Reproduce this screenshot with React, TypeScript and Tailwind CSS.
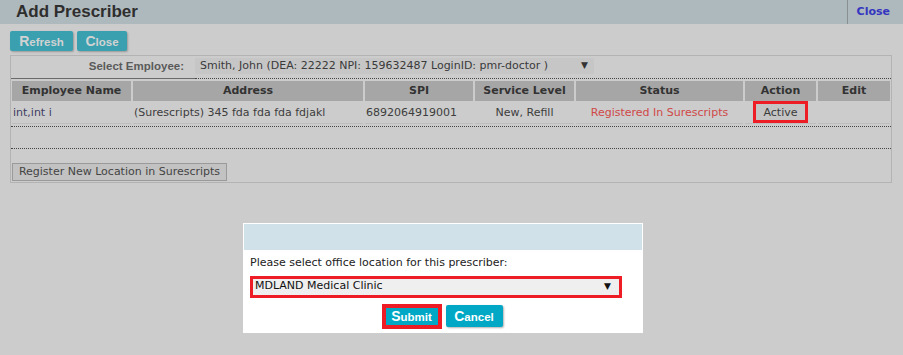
const cols = 'grid grid-cols-[119px_230px_108px_99px_167px_71px_72px] gap-x-[2px]'

const FirstBig = ({ text }: { text: string }) => (
  <span className="font-['Liberation_Sans',Arial,sans-serif] font-bold leading-none">
    <span className="text-[14px]">{text[0]}</span>
    <span className="text-[11.5px]">{text.slice(1)}</span>
  </span>
)

const App = () => {
  return (
    <div className="relative w-[903px] h-[355px] bg-[#cccccc] overflow-hidden font-['DejaVu_Sans',Verdana,sans-serif] text-[11px] text-[#3d3d3d]">
      {/* title bar */}
      <div className="flex items-center justify-between h-[24px] bg-[#aeb9be]">
        <div className="pl-[16px] font-['Liberation_Sans',Arial,sans-serif] font-bold text-[17px] text-[#2e2e2e]">
          Add Prescriber
        </div>
        <div className="flex items-center h-full border-l border-[#8a8f92] pl-[9px] pr-[13px] font-bold text-[11px] text-[#3535c0]">
          Close
        </div>
      </div>

      {/* toolbar */}
      <div className="flex gap-[4px] ml-[10px] mt-[7px]">
        <button className="flex items-center justify-center w-[63px] h-[20px] rounded-[2px] bg-[#3aa0b0] text-[#d2d2d2] shadow-[1px_1px_2px_rgba(0,0,0,0.25)]">
          <FirstBig text="Refresh" />
        </button>
        <button className="flex items-center justify-center w-[50px] h-[20px] rounded-[2px] bg-[#3aa0b0] text-[#d2d2d2] shadow-[1px_1px_2px_rgba(0,0,0,0.25)]">
          <FirstBig text="Close" />
        </button>
      </div>

      {/* panel */}
      <div className="ml-[10px] mt-[4px] w-[882px] h-[128px] border border-[#b3b3b3]">
        <div className="flex h-[23px]">
          <div className="w-[184px] flex items-center justify-end pr-[11px] border-b border-[#6a6a6a] font-['Liberation_Sans',Arial,sans-serif] font-bold text-[11.5px] text-[#5a5a5a]">
            Select Employee:
          </div>
          <div className="flex-1 pt-[2px] border-b border-dotted border-[#444]">
            <div className="flex items-center justify-between w-[399px] h-[16px] bg-[#c6c6c6] pl-[5px] pr-[6px] text-[#3a3a3a]">
              <span>Smith, John (DEA: 22222 NPI: 159632487 LoginID: pmr-doctor )</span>
              <span className="text-[9px] text-[#333]">▼</span>
            </div>
          </div>
        </div>

        <div className={`${cols} ml-[1px] mt-[2px] h-[20px] font-bold text-[#333]`}>
          {['Employee Name', 'Address', 'SPI', 'Service Level', 'Status', 'Action', 'Edit'].map((h) => (
            <div key={h} className="flex items-center justify-center bg-[#a6a6a6]">
              {h}
            </div>
          ))}
        </div>

        <div className={`${cols} ml-[1px] h-[23px]`}>
          <div className="flex items-center pl-[1px] pt-[2px] border-b border-[#bdbdbd] text-[#3c3c62]">int,int i</div>
          <div className="flex items-center pl-[1px] pt-[2px] border-b border-[#bdbdbd]">
            (Surescripts) 345 fda fda fda fdjakl
          </div>
          <div className="flex items-center pl-[1px] pt-[2px] border-b border-[#bdbdbd]">6892064919001</div>
          <div className="flex items-center justify-center pt-[2px] border-b border-[#bdbdbd]">New, Refill</div>
          <div className="flex items-center justify-center pt-[2px] border-b border-[#bdbdbd] text-[#d04848]">
            Registered In Surescripts
          </div>
          <div className="flex items-center justify-center border-b border-[#bdbdbd]">
            <div className="flex items-center justify-center w-[55px] h-[22px] border-[3px] border-[#ee1c25]">
              <span className="flex items-center justify-center w-full h-full pt-[2px] bg-[#c4c4c4] text-[#3a3a3a]">Active</span>
            </div>
          </div>
          <div className="border-b border-[#bdbdbd]" />
        </div>

        <div className="mt-[2px] h-[23px] border-t border-b border-dotted border-[#444]" />

        <div className="ml-[1px] mt-[14px]">
          <button className="h-[18px] w-[215px] border border-[#9a9a9a] bg-[#c2c2c2] text-[#444]">
            Register New Location in Surescripts
          </button>
        </div>
      </div>

      {/* modal */}
      <div className="absolute left-[243px] top-[223px] w-[400px] h-[110px] bg-white p-[1px]">
        <div className="h-[26px] bg-[#d0e1ea]" />
        <div className="pl-[6px] pt-[5px] text-[#222]">Please select office location for this prescriber:</div>
        <div className="ml-[6px] mt-[4px] w-[372px] h-[22px] border-[3px] border-[#ee1c25]">
          <div className="flex items-center justify-between h-full bg-[#efefef] pl-[2px] pr-[8px] text-[#111]">
            <span>MDLAND Medical Clinic</span>
            <span className="text-[9px]">▼</span>
          </div>
        </div>
        <div className="flex justify-center items-center gap-[4px] mt-[6px] pr-[2px]">
          <div className="w-[60px] h-[25px] border-[4px] border-[#ee1c25]">
            <button className="flex items-center justify-center w-full h-full bg-[#00a8c6] text-white">
              <FirstBig text="Submit" />
            </button>
          </div>
          <button className="flex items-center justify-center w-[57px] h-[22px] rounded-[2px] bg-[#00a8c6] text-white shadow-[1px_1px_2px_rgba(0,0,0,0.3)]">
            <FirstBig text="Cancel" />
          </button>
        </div>
      </div>
    </div>
  )
}

export default App
